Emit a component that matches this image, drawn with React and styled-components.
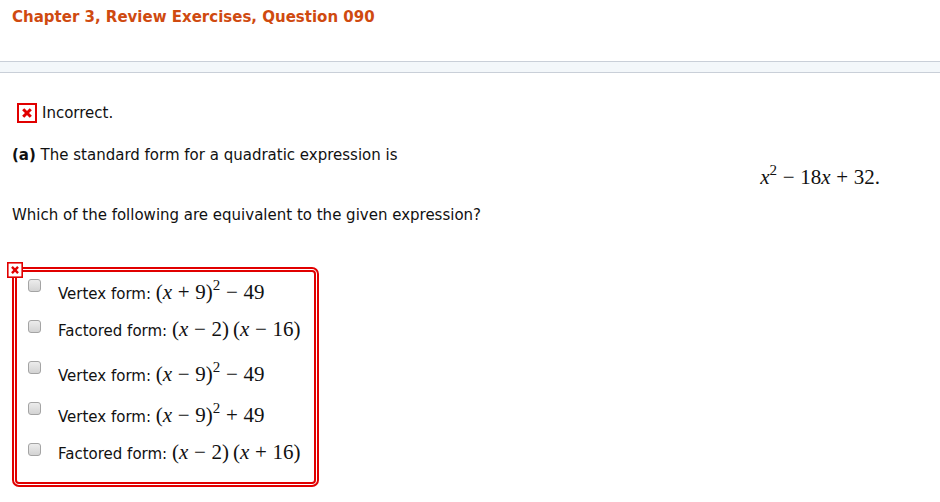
import styled, { createGlobalStyle } from 'styled-components';

const GlobalStyle = createGlobalStyle`
  body {
    margin: 0;
    background: #fff;
  }
`;

const Page = styled.div`
  font-family: "DejaVu Sans", Verdana, sans-serif;
  font-size: 15px;
  color: #111;
  width: 940px;
`;

const Header = styled.header`
  height: 61px;
  box-sizing: border-box;
  padding: 8px 12px 0;
`;

const Title = styled.h1`
  margin: 0;
  font-size: 15px;
  line-height: 18px;
  font-weight: bold;
  color: #cf4a10;
`;

const Strip = styled.div`
  height: 10px;
  background: #f3f7fa;
  border-top: 1px solid #c9cfd8;
  border-bottom: 1px solid #c9cfd8;
`;

const Content = styled.main`
  padding: 30px 12px 0;
`;

const Status = styled.div`
  display: flex;
  align-items: center;
  gap: 5px;
  padding-left: 5px;
  line-height: 20px;
`;

const Part = styled.p`
  margin: 24px 0 0;
  line-height: 16px;
`;

const PartLabel = styled.b`
  font-weight: bold;
`;

const Display = styled.div`
  display: flex;
  justify-content: flex-end;
  padding-right: 48px;
  margin-top: 2px;
  line-height: 24px;
`;

const Question = styled.p`
  margin: 18px 0 0;
  line-height: 16px;
`;

const AnswerBox = styled.div`
  position: relative;
  margin-top: 44px;
  width: 307px;
  height: 220px;
  box-sizing: border-box;
  border: 5px double #e10000;
  border-radius: 7px;
  padding: 7px 0 0 11px;
  display: grid;
  grid-template-rows: repeat(4, 41px) 29px;
`;

const CornerMark = styled.span`
  position: absolute;
  left: -10px;
  top: -10px;
  display: flex;
`;

const Option = styled.label`
  display: flex;
  align-items: flex-start;
  gap: 17px;
`;

const Box = styled.span`
  flex: none;
  width: 13px;
  height: 13px;
  box-sizing: border-box;
  border: 1px solid #a4a4a4;
  border-radius: 3px;
  background: linear-gradient(#ececec, #d3d3d3);
`;

const OptionText = styled.span`
  line-height: 22px;
  margin-top: ${(p) => (p.$raised ? 2 : -2)}px;
  white-space: nowrap;
`;

const MathExpr = styled.span`
  font-family: "Liberation Serif", "Times New Roman", serif;
  font-size: 21px;
  color: #111;
`;

const Var = styled.i`
  font-style: italic;
`;

const Op = styled.span`
  margin: 0 0.27em;
`;

const Sup = styled.sup`
  font-size: 15px;
  vertical-align: 9px;
  line-height: 0;
`;

function XMark({ size }) {
  return (
    <svg width={size} height={size} viewBox="0 0 20 20">
      <rect x="1" y="1" width="18" height="18" fill="#fff" stroke="#e10000" strokeWidth="2" />
      <path d="M6.2 6.2 L13.8 13.8 M13.8 6.2 L6.2 13.8" stroke="#e10000" strokeWidth="3" />
    </svg>
  );
}

const options = [
  {
    label: 'Vertex form:',
    raised: true,
    math: (
      <>
        (<Var>x</Var><Op>+</Op>9)<Sup>2</Sup><Op>−</Op>49
      </>
    ),
  },
  {
    label: 'Factored form:',
    math: (
      <>
        (<Var>x</Var><Op>−</Op>2)&thinsp;(<Var>x</Var><Op>−</Op>16)
      </>
    ),
  },
  {
    label: 'Vertex form:',
    raised: true,
    math: (
      <>
        (<Var>x</Var><Op>−</Op>9)<Sup>2</Sup><Op>−</Op>49
      </>
    ),
  },
  {
    label: 'Vertex form:',
    raised: true,
    math: (
      <>
        (<Var>x</Var><Op>−</Op>9)<Sup>2</Sup><Op>+</Op>49
      </>
    ),
  },
  {
    label: 'Factored form:',
    math: (
      <>
        (<Var>x</Var><Op>−</Op>2)&thinsp;(<Var>x</Var><Op>+</Op>16)
      </>
    ),
  },
];

export default function App() {
  return (
    <Page>
      <GlobalStyle />
      <Header>
        <Title>Chapter 3, Review Exercises, Question 090</Title>
      </Header>
      <Strip />
      <Content>
        <Status>
          <XMark size={20} />
          Incorrect.
        </Status>
        <Part>
          <PartLabel>(a)</PartLabel> The standard form for a quadratic expression is
        </Part>
        <Display>
          <MathExpr>
            <Var>x</Var><Sup>2</Sup><Op>−</Op>18<Var>x</Var><Op>+</Op>32.
          </MathExpr>
        </Display>
        <Question>Which of the following are equivalent to the given expression?</Question>
        <AnswerBox>
          <CornerMark>
            <XMark size={16} />
          </CornerMark>
          {options.map((o, i) => (
            <Option key={i}>
              <Box />
              <OptionText $raised={o.raised}>
                {o.label} <MathExpr>{o.math}</MathExpr>
              </OptionText>
            </Option>
          ))}
        </AnswerBox>
      </Content>
    </Page>
  );
}
